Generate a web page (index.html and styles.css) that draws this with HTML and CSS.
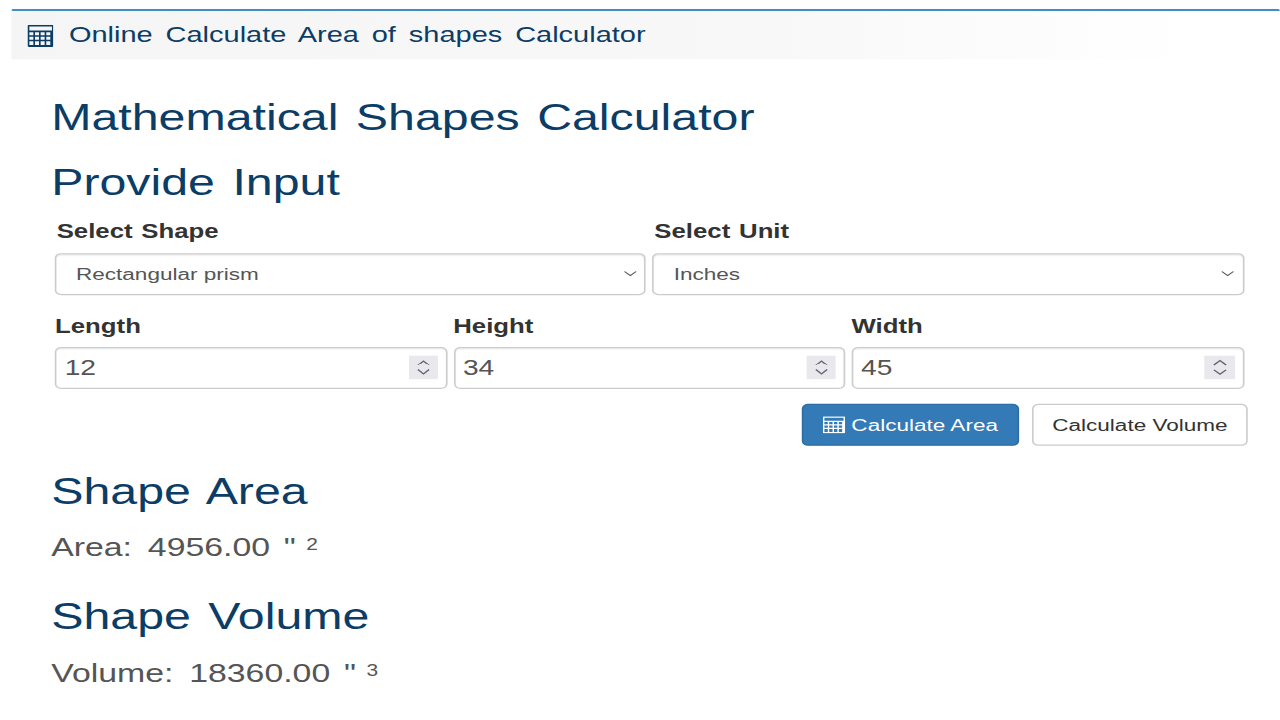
FILE: index.html
```html
<!DOCTYPE html>
<html lang="en">
<head>
    <meta charset="UTF-8">
    <meta name="viewport" content="width=device-width, initial-scale=1.0">
    <title>Online Calculate Area of shapes Calculator</title>
    <link rel="stylesheet" href="styles.css">
</head>
<body>
    <div class="page">
        <div class="panel">
            <div class="panel-heading">
                <svg class="icon"><use href="#calc"></use></svg>
                <span>Online Calculate Area of shapes Calculator</span>
            </div>
            <div class="panel-body">
                <h2>Mathematical Shapes Calculator</h2>
                <h2>Provide Input</h2>

                <div class="select-row">
                    <div class="field">
                        <label class="select-label" for="shape">Select Shape</label>
                        <select id="shape">
                            <option>Rectangular prism</option>
                            <option>Cube</option>
                            <option>Cylinder</option>
                        </select>
                    </div>
                    <div class="field">
                        <label class="select-label" for="unit">Select Unit</label>
                        <select id="unit">
                            <option>Inches</option>
                            <option>Feet</option>
                            <option>Meters</option>
                        </select>
                    </div>
                </div>

                <div class="input-row">
                    <div class="field">
                        <label for="length">Length</label>
                        <input type="number" id="length" value="12">
                    </div>
                    <div class="field">
                        <label for="height">Height</label>
                        <input type="number" id="height" value="34">
                    </div>
                    <div class="field">
                        <label for="width">Width</label>
                        <input type="number" id="width" value="45">
                    </div>
                </div>

                <div class="button-row">
                    <button class="btn btn-primary">
                        <svg class="btn-icon"><use href="#calc"></use></svg>
                        Calculate Area
                    </button>
                    <button class="btn btn-default">Calculate Volume</button>
                </div>

                <h2 class="result-title">Shape Area</h2>
                <p class="result">Area: 4956.00 <span class="unit">"</span><sup>2</sup></p>
                <h2 class="result-title">Shape Volume</h2>
                <p class="result">Volume: 18360.00 <span class="unit">"</span><sup>3</sup></p>
            </div>
        </div>
    </div>

    <svg class="defs" width="0" height="0">
        <symbol id="calc" viewBox="0 1 16 14" preserveAspectRatio="none">
            <path fill="currentColor" fill-rule="evenodd" d="M1 1h14a1 1 0 0 1 1 1v12a1 1 0 0 1-1 1H1a1 1 0 0 1-1-1V2a1 1 0 0 1 1-1zm.2 1.2v2.4h13.6V2.2zm0 3.6v1.8h2.4V5.8zm3.4 0v1.8H7V5.8zm3.4 0v1.8h2.4V5.8zm3.4 0v1.8h2.4V5.8zM1.2 8.6v1.8h2.4V8.6zm3.4 0v1.8H7V8.6zm3.4 0v1.8h2.4V8.6zm3.4 0v1.8h2.4V8.6zM1.2 11.4v2.4h2.4v-2.4zm3.4 0v2.4H7v-2.4zm3.4 0v2.4h2.4v-2.4zm3.4 0v2.4h2.4v-2.4z"/>
        </symbol>
    </svg>
</body>
</html>
```

FILE: styles.css
```css
* {
    box-sizing: border-box;
    font-family: 'Liberation Sans', Arial, sans-serif;
}

html, body {
    margin: 0;
    padding: 0;
    height: 720px;
    overflow: hidden;
    background-color: white;
}

/* the whole page is stretched, same as the original capture */
.page {
    width: 795px;
    height: 583px;
    padding: 7px 0 0 6.8px;
    transform: scale(1.61, 1.235);
    transform-origin: 0 0;
}

.panel {
    border-top: 2px solid #3d8fc4;
    border-radius: 2px 2px 0 0;
}

.panel-heading {
    height: 39px;
    display: flex;
    align-items: center;
    gap: 9.5px;
    padding-left: 10px;
    font-size: 18px;
    word-spacing: 3px;
    color: #0b3d66;
    background: linear-gradient(to right, #f5f5f5, #f8f8f8 60%, white 93%);
}

.icon {
    width: 16.5px;
    height: 18px;
    flex: none;
}

.defs {
    position: absolute;
}

.panel-body {
    padding: 30px 0 0 25px;
    width: 770px;
}

h2 {
    margin: 0 0 20px;
    font-size: 30px;
    font-weight: 400;
    line-height: 33px;
    word-spacing: 2.5px;
    color: #0b3d66;
}

label {
    display: block;
    font-size: 16px;
    font-weight: 700;
    line-height: 20px;
    margin-bottom: 6.3px;
    color: #333;
    word-spacing: 1px;
}

.select-label {
    padding-left: 1px;
    margin-bottom: 6.8px;
}

.select-row {
    display: grid;
    grid-template-columns: 1fr 1fr;
    gap: 4px;
    margin: -6px 0 0 2.4px;
    width: 738.5px;
}

.input-row {
    display: grid;
    grid-template-columns: 1fr 1fr 1fr;
    gap: 3.5px;
    margin: 16px 0 0 2.4px;
    width: 738.5px;
}

select, input {
    display: block;
    width: 100%;
    height: 34px;
    border: 1px solid #ccc;
    border-radius: 4px;
    background-color: white;
    color: #555;
    box-shadow: inset 0 1px 1px rgba(0, 0, 0, 0.075);
}

select {
    appearance: none;
    font-size: 14px;
    padding: 6px 12px;
    background-image: url("data:image/svg+xml,%3Csvg xmlns='http://www.w3.org/2000/svg' viewBox='0 0 10 6' preserveAspectRatio='none'%3E%3Cpath d='M1 1l4 4 4-4' fill='none' stroke='%23555' stroke-width='1'/%3E%3C/svg%3E");
    background-repeat: no-repeat;
    background-position: right 4.5px center;
    background-size: 9px 5px;
}

input {
    font-size: 17.5px;
    padding: 6px 5px;
}

input::-webkit-inner-spin-button {
    appearance: none;
    opacity: 1;
    width: 18.5px;
    height: 19px;
    margin-right: 0;
    background-color: #e9e9ed;
    background-image: url("data:image/svg+xml,%3Csvg xmlns='http://www.w3.org/2000/svg' viewBox='0 0 18 19' preserveAspectRatio='none'%3E%3Cpath d='M5.5 7.5L9 4l3.5 3.5M5.5 11.5L9 15l3.5-3.5' fill='none' stroke='%23667' stroke-width='1'/%3E%3C/svg%3E");
}

.button-row {
    display: flex;
    justify-content: flex-end;
    gap: 8px;
    margin: 12px 0 20px;
    width: 743.4px;
}

.btn {
    height: 34px;
    padding: 6px 12px;
    font-size: 14px;
    color: #333;
    background-color: white;
    border: 1px solid #ccc;
    border-radius: 4px;
}

.btn-default {
    padding: 6px 11.7px;
}

.btn-primary {
    color: white;
    background-color: #337ab7;
    border-color: #2e6da4;
}

.btn-icon {
    width: 14px;
    height: 14px;
    vertical-align: -2px;
}

.result-title {
    margin-bottom: 15px;
}

.result + .result-title {
    margin-bottom: 16px;
}

.result {
    margin: 0 0 25px;
    font-size: 21px;
    line-height: 28px;
    word-spacing: 4px;
    color: #555;
}

.unit {
    margin-left: -1.3px;
}

sup {
    font-size: 13px;
    line-height: 0;
    margin-left: 6.5px;
    vertical-align: 5.5px;
}
```
